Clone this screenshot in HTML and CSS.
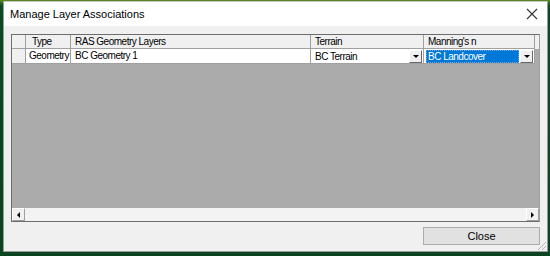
FILE: index.html
```html
<!DOCTYPE html>
<html lang="en">
<head>
    <meta charset="UTF-8">
    <title>Manage Layer Associations</title>
    <link rel="stylesheet" href="styles.css">
</head>
<body>
    <div class="window">
        <div class="titlebar">
            <span class="title">Manage Layer Associations</span>
            <svg class="close-x" width="12" height="12" viewBox="0 0 12 12">
                <path d="M1 1 L11 11 M11 1 L1 11" stroke="#333" stroke-width="1.1" fill="none"/>
            </svg>
        </div>
        <div class="body">
            <div class="grid">
                <div class="grid-row head">
                    <div class="cell rh"></div>
                    <div class="cell c-type">Type</div>
                    <div class="cell c-ras">RAS Geometry Layers</div>
                    <div class="cell c-terrain">Terrain</div>
                    <div class="cell c-mann">Manning's n</div>
                    <div class="cell filler"></div>
                </div>
                <div class="grid-row data">
                    <div class="cell rh"></div>
                    <div class="cell c-type">Geometry</div>
                    <div class="cell c-ras">BC Geometry 1</div>
                    <div class="cell c-terrain combo">
                        <span class="combo-text">BC Terrain</span>
                        <span class="drop"><i></i></span>
                    </div>
                    <div class="cell c-mann combo">
                        <span class="combo-text selected">BC Landcover</span>
                        <span class="drop"><i></i></span>
                    </div>
                    <div class="cell filler"></div>
                </div>
                <div class="grid-empty"></div>
                <div class="hscroll">
                    <span class="sbtn"><i class="arr-left"></i></span>
                    <span class="track"></span>
                    <span class="sbtn"><i class="arr-right"></i></span>
                </div>
            </div>
            <div class="actions">
                <button class="btn">Close</button>
            </div>
        </div>
        <div class="grip"></div>
    </div>
</body>
</html>
```

FILE: styles.css
```css
body {
    margin: 0;
    width: 550px;
    height: 256px;
    overflow: hidden;
    background: linear-gradient(180deg, #5d8a22 0, #2f6a1c 3px, #0b4a22 6px, #0a4420 100%);
    font-family: "Liberation Sans", Arial, sans-serif;
    font-size: 10px;
    letter-spacing: -0.5px;
    color: #000;
}
.window {
    position: relative;
    margin: 1px 0 0 3px;
    width: 543px;
    height: 249px;
    background: #f0f0f0;
    border: 1px solid #9a9a9a;
    border-top-color: #c8c8c8;
}
.titlebar {
    height: 24px;
    background: #fff;
    display: flex;
    align-items: center;
    justify-content: space-between;
    padding: 0 9px 0 6px;
}
.title {
    font-size: 11px;
    letter-spacing: 0;
    color: #000;
}
.body {
    padding: 8px 7px 0 7px;
}
.grid {
    height: 186px;
    display: flex;
    flex-direction: column;
    border: 1px solid #6d6d6d;
    border-right-color: #a0a0a0;
    border-bottom-color: #6d6d6d;
    background: #ababab;
}
.grid-row {
    display: flex;
}
.cell {
    box-sizing: border-box;
    border-right: 1px solid #a0a0a0;
    border-bottom: 1px solid #a0a0a0;
    padding-left: 4px;
    white-space: nowrap;
    overflow: hidden;
}
.head {
    height: 14px;
    line-height: 13px;
    background: #f0f0f0;
}
.data {
    height: 15px;
    line-height: 14px;
    background: #fff;
}
.rh { width: 14px; background: #f0f0f0; padding: 0; }
.c-type { width: 45px; padding-left: 3px; }
.head .c-type { padding-left: 6px; }
.c-ras { width: 240px; }
.c-terrain { width: 113px; }
.c-mann { width: 111px; }
.filler { flex: 1; border: none; background: #f0f0f0; }
.data .filler { background: #ababab; }
.combo {
    display: flex;
    align-items: center;
    padding-left: 2px;
}
.combo-text {
    flex: 1;
    height: 13px;
    line-height: 13px;
    padding-left: 2px;
}
.combo-text.selected {
    background: #0078d7;
    color: #fff;
    outline: 1px dotted #7aa7e0;
    outline-offset: -1px;
}
.drop {
    width: 11px;
    height: 11px;
    margin: 0 1px 0 1px;
    background: #f0f0f0;
    border: 1px solid;
    border-color: #fff #696969 #696969 #fff;
    display: flex;
    align-items: center;
    justify-content: center;
}
.drop i {
    width: 0;
    height: 0;
    border-left: 3px solid transparent;
    border-right: 3px solid transparent;
    border-top: 3px solid #000;
    margin-top: 1px;
}
.grid-empty {
    flex: 1;
}
.hscroll {
    height: 13px;
    display: flex;
    background: #f0f0f0;
}
.sbtn {
    width: 11px;
    height: 11px;
    border: 1px solid;
    border-color: #fff #a0a0a0 #a0a0a0 #fff;
    background: #f0f0f0;
    display: flex;
    align-items: center;
    justify-content: center;
}
.track {
    flex: 1;
    background: #f3f3f3;
}
.arr-left {
    border-top: 3px solid transparent;
    border-bottom: 3px solid transparent;
    border-right: 3px solid #000;
}
.arr-right {
    border-top: 3px solid transparent;
    border-bottom: 3px solid transparent;
    border-left: 3px solid #000;
}
.actions {
    display: flex;
    justify-content: flex-end;
    padding-top: 5px;
}
.btn {
    width: 117px;
    height: 18px;
    background: #e1e1e1;
    border: 1px solid #adadad;
    font-family: "Liberation Sans", Arial, sans-serif;
    font-size: 11px;
    color: #000;
    padding: 0;
}
.grip {
    position: absolute;
    right: 1px;
    bottom: 1px;
    width: 10px;
    height: 10px;
    background: repeating-linear-gradient(135deg, transparent 0 2px, #b8b8b8 2px 3px);
    clip-path: polygon(100% 0, 100% 100%, 0 100%);
}
```
